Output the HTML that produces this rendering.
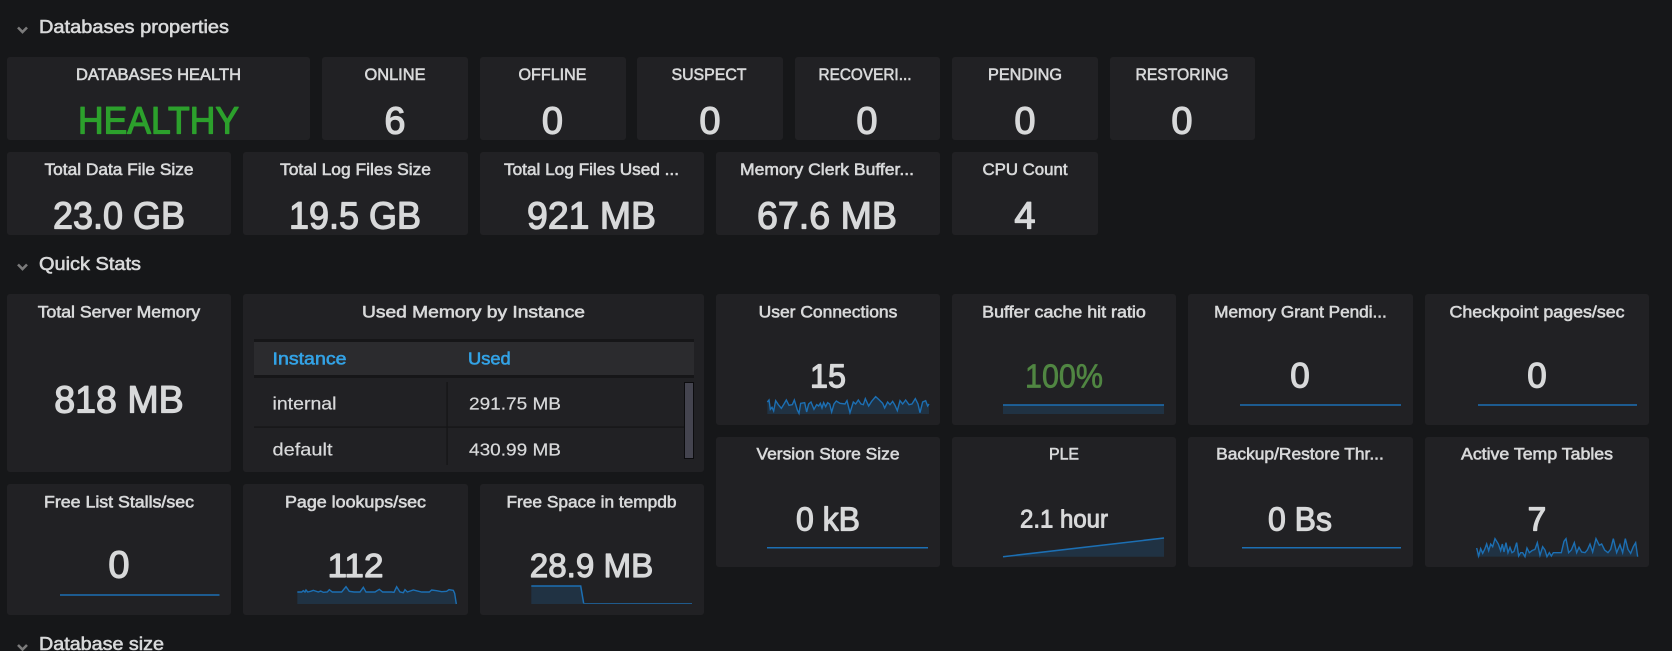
<!DOCTYPE html>
<html><head><meta charset="utf-8"><title>Dashboard</title>
<style>
html,body{margin:0;padding:0;background:#161719;width:1672px;height:651px;overflow:hidden}
svg{display:block;position:absolute;left:0;top:0}
text{font-family:"Liberation Sans",Arial,sans-serif;fill:#d8d9da;stroke-linejoin:round}
.ti{font-size:16.8px;text-anchor:middle;stroke:#d8d9da;stroke-width:.6px}
.v{font-size:38px;text-anchor:middle;stroke:#d8d9da;stroke-width:1.25px}
.m{font-size:33.5px;text-anchor:middle;stroke:#d8d9da;stroke-width:1.15px}
.s{font-size:25px;text-anchor:middle;stroke:#d8d9da;stroke-width:.9px}
.h{font-size:18.5px;stroke:#d8d9da;stroke-width:.6px}
.c{font-size:17.5px;stroke:#d8d9da;stroke-width:.2px}
.th{font-size:17.5px;fill:#33a2e5;stroke:#33a2e5;stroke-width:.6px}
.p{fill:#212124}
.l{fill:none;stroke:#1c6fb3;stroke-width:1.5}
.a{fill:#1f78c1;fill-opacity:.2;stroke:none}
.ch{fill:none;stroke:#7b7b7b;stroke-width:2.6}
</style></head><body>
<svg width="1672" height="651" viewBox="0 0 1672 651" xmlns="http://www.w3.org/2000/svg">
<!-- panels -->
<rect class="p" x="7" y="57" width="303" height="83" rx="3"/>
<rect class="p" x="322" y="57" width="146" height="83" rx="3"/>
<rect class="p" x="480" y="57" width="146" height="83" rx="3"/>
<rect class="p" x="637" y="57" width="146" height="83" rx="3"/>
<rect class="p" x="795" y="57" width="145" height="83" rx="3"/>
<rect class="p" x="952" y="57" width="146" height="83" rx="3"/>
<rect class="p" x="1110" y="57" width="145" height="83" rx="3"/>
<rect class="p" x="7" y="152" width="224" height="83" rx="3"/>
<rect class="p" x="243" y="152" width="225" height="83" rx="3"/>
<rect class="p" x="480" y="152" width="224" height="83" rx="3"/>
<rect class="p" x="716" y="152" width="224" height="83" rx="3"/>
<rect class="p" x="952" y="152" width="146" height="83" rx="3"/>
<rect class="p" x="7" y="294" width="224" height="178" rx="3"/>
<rect class="p" x="243" y="294" width="461" height="178" rx="3"/>
<rect class="p" x="7" y="484" width="224" height="131" rx="3"/>
<rect class="p" x="243" y="484" width="225" height="131" rx="3"/>
<rect class="p" x="480" y="484" width="224" height="131" rx="3"/>
<rect class="p" x="716" y="294" width="224" height="131" rx="3"/>
<rect class="p" x="952" y="294" width="224" height="131" rx="3"/>
<rect class="p" x="1188" y="294" width="225" height="131" rx="3"/>
<rect class="p" x="1425" y="294" width="224" height="131" rx="3"/>
<rect class="p" x="716" y="437" width="224" height="130" rx="3"/>
<rect class="p" x="952" y="437" width="224" height="130" rx="3"/>
<rect class="p" x="1188" y="437" width="225" height="130" rx="3"/>
<rect class="p" x="1425" y="437" width="224" height="130" rx="3"/>

<!-- section headers -->
<path class="ch" d="M18 27.5l4.5 4.5 4.5-4.5"/>
<path class="ch" d="M18 264.5l4.5 4.5 4.5-4.5"/>
<path class="ch" d="M18 645l4.5 4.5 4.5-4.5"/>
<text class="h" x="39" y="33" textLength="190" lengthAdjust="spacingAndGlyphs">Databases properties</text>
<text class="h" x="39" y="270" textLength="102" lengthAdjust="spacingAndGlyphs">Quick Stats</text>
<text class="h" x="39" y="650" textLength="125" lengthAdjust="spacingAndGlyphs">Database size</text>

<!-- row 1 -->
<text class="ti" x="158.5" y="80" textLength="165" lengthAdjust="spacingAndGlyphs">DATABASES HEALTH</text>
<text class="ti" x="395" y="80" textLength="61" lengthAdjust="spacingAndGlyphs">ONLINE</text>
<text class="ti" x="552.5" y="80" textLength="68" lengthAdjust="spacingAndGlyphs">OFFLINE</text>
<text class="ti" x="709" y="80" textLength="75" lengthAdjust="spacingAndGlyphs">SUSPECT</text>
<text class="ti" x="865" y="80" textLength="93" lengthAdjust="spacingAndGlyphs">RECOVERI...</text>
<text class="ti" x="1025" y="80" textLength="74" lengthAdjust="spacingAndGlyphs">PENDING</text>
<text class="ti" x="1182" y="80" textLength="93" lengthAdjust="spacingAndGlyphs">RESTORING</text>
<text class="v" x="158.5" y="133.5" textLength="161" lengthAdjust="spacingAndGlyphs" style="fill:#2ca02c;stroke:#2ca02c">HEALTHY</text>
<text class="v" x="395" y="133.5">6</text>
<text class="v" x="552.5" y="133.5">0</text>
<text class="v" x="710" y="133.5">0</text>
<text class="v" x="867" y="133.5">0</text>
<text class="v" x="1025" y="133.5">0</text>
<text class="v" x="1182" y="133.5">0</text>

<!-- row 2 -->
<text class="ti" x="119" y="175" textLength="149" lengthAdjust="spacingAndGlyphs">Total Data File Size</text>
<text class="ti" x="355.5" y="175" textLength="151" lengthAdjust="spacingAndGlyphs">Total Log Files Size</text>
<text class="ti" x="591.5" y="175" textLength="175" lengthAdjust="spacingAndGlyphs">Total Log Files Used ...</text>
<text class="ti" x="827" y="175" textLength="174" lengthAdjust="spacingAndGlyphs">Memory Clerk Buffer...</text>
<text class="ti" x="1025" y="175" textLength="85" lengthAdjust="spacingAndGlyphs">CPU Count</text>
<text class="v" x="119" y="228.3" textLength="132" lengthAdjust="spacingAndGlyphs">23.0 GB</text>
<text class="v" x="355" y="228.3" textLength="132" lengthAdjust="spacingAndGlyphs">19.5 GB</text>
<text class="v" x="591.5" y="228.3" textLength="129" lengthAdjust="spacingAndGlyphs">921 MB</text>
<text class="v" x="827" y="228.3" textLength="140" lengthAdjust="spacingAndGlyphs">67.6 MB</text>
<text class="v" x="1025" y="228.3">4</text>

<!-- left quick stats -->
<text class="ti" x="119" y="317.6" textLength="162.5" lengthAdjust="spacingAndGlyphs">Total Server Memory</text>
<text class="ti" x="473.5" y="317.6" textLength="223" lengthAdjust="spacingAndGlyphs">Used Memory by Instance</text>
<text class="v" x="119" y="412.7" textLength="129.5" lengthAdjust="spacingAndGlyphs">818 MB</text>
<text class="ti" x="119" y="507.6" textLength="150" lengthAdjust="spacingAndGlyphs">Free List Stalls/sec</text>
<text class="ti" x="355.5" y="507.6" textLength="141" lengthAdjust="spacingAndGlyphs">Page lookups/sec</text>
<text class="ti" x="591.5" y="507.6" textLength="170" lengthAdjust="spacingAndGlyphs">Free Space in tempdb</text>
<text class="v" x="119" y="577.7">0</text>
<text class="m" x="355.5" y="577" textLength="56" lengthAdjust="spacingAndGlyphs">112</text>
<text class="m" x="591.5" y="577" textLength="123.5" lengthAdjust="spacingAndGlyphs">28.9 MB</text>

<!-- table -->
<rect x="254" y="339" width="440" height="3" fill="#161618"/>
<rect x="254" y="342" width="440" height="33" fill="#2b2b2e"/>
<rect x="254" y="375" width="440" height="3" fill="#161618"/>
<rect x="446.4" y="382" width="1.4" height="83" fill="#161618"/>
<rect x="254" y="426.4" width="430" height="1.4" fill="#161618"/>
<rect x="684.5" y="382.5" width="9" height="76" fill="#44444f" stroke="#0c0c0e"/>
<text class="th" x="272.5" y="364.7" textLength="74" lengthAdjust="spacingAndGlyphs">Instance</text>
<text class="th" x="468" y="364.7" textLength="42.7" lengthAdjust="spacingAndGlyphs">Used</text>
<text class="c" x="272.5" y="409.5" textLength="64" lengthAdjust="spacingAndGlyphs">internal</text>
<text class="c" x="469" y="409.5" textLength="92" lengthAdjust="spacingAndGlyphs">291.75 MB</text>
<text class="c" x="272.5" y="455.5" textLength="60" lengthAdjust="spacingAndGlyphs">default</text>
<text class="c" x="469" y="455.5" textLength="92" lengthAdjust="spacingAndGlyphs">430.99 MB</text>

<!-- right grid -->
<text class="ti" x="828" y="317.6" textLength="138.7" lengthAdjust="spacingAndGlyphs">User Connections</text>
<text class="ti" x="1064" y="317.6" textLength="163.7" lengthAdjust="spacingAndGlyphs">Buffer cache hit ratio</text>
<text class="ti" x="1300.5" y="317.6" textLength="172.7" lengthAdjust="spacingAndGlyphs">Memory Grant Pendi...</text>
<text class="ti" x="1537" y="317.6" textLength="175" lengthAdjust="spacingAndGlyphs">Checkpoint pages/sec</text>
<text class="ti" x="828" y="459.6" textLength="143" lengthAdjust="spacingAndGlyphs">Version Store Size</text>
<text class="ti" x="1064" y="459.6" textLength="30" lengthAdjust="spacingAndGlyphs">PLE</text>
<text class="ti" x="1300" y="459.6" textLength="167.7" lengthAdjust="spacingAndGlyphs">Backup/Restore Thr...</text>
<text class="ti" x="1537" y="459.6" textLength="152" lengthAdjust="spacingAndGlyphs">Active Temp Tables</text>
<text class="m" x="828" y="387.3" textLength="36" lengthAdjust="spacingAndGlyphs">15</text>
<text class="m" x="1064" y="387.3" textLength="78" lengthAdjust="spacingAndGlyphs" style="fill:#508642;stroke:#508642;stroke-width:.7px">100%</text>
<text class="v" x="1300" y="387.3" style="font-size:35px">0</text>
<text class="v" x="1537" y="387.3" style="font-size:35px">0</text>
<text class="m" x="828" y="530.7" textLength="64" lengthAdjust="spacingAndGlyphs">0 kB</text>
<text class="s" x="1064" y="527.7" textLength="88" lengthAdjust="spacingAndGlyphs">2.1 hour</text>
<text class="m" x="1300" y="530.7" textLength="64" lengthAdjust="spacingAndGlyphs">0 Bs</text>
<text class="m" x="1537" y="530.7">7</text>

<!-- flat sparklines -->
<path class="l" d="M60 595H219.5"/>
<rect class="a" x="1003" y="405" width="161" height="9"/>
<path class="l" d="M1003 405H1164"/>
<path class="l" d="M1240 405H1401"/>
<path class="l" d="M1478 405H1637"/>
<path class="l" d="M767 547.7H928"/>
<path class="l" d="M1242 547.7H1401"/>
<path class="a" d="M1003 556.7L1164 538V556.7Z"/>
<path class="l" d="M1003 556.7L1164 538"/>
<path class="a" d="M531.3 586H580.7L583.7 603.5H692V604H531.3Z"/>
<path class="l" d="M531.3 586H580.7L583.7 603.5"/>
<path d="M583.7 603.5H692" fill="none" stroke="#1f5a8c" stroke-width="1"/>

<!-- User Connections sparkline -->
<g transform="translate(760 390) scale(.3333)">
<path class="a" d="M22 36L27 30 31 58 36 52 41 63 47 32 55 44 64 55 72 42 79 30 87 46 97 44 103 30 112 60 117 70 122 40 134 38 140 66 146 42 153 36 162 58 170 44 176 48 181 40 186 54 191 38 197 50 203 38 209 42 215 66 222 42 229 33 240 40 255 42 261 32 270 68 280 36 287 42 295 30 303 42 310 44 316 26 326 48 335 34 347 20 358 30 368 40 374 54 383 36 390 44 398 34 405 46 412 62 420 32 428 42 437 30 447 44 456 42 466 26 474 42 480 68 488 36 497 32 503 48 507 42V72H22Z"/>
<path class="l" style="stroke-width:4.2" d="M22 36L27 30 31 58 36 52 41 63 47 32 55 44 64 55 72 42 79 30 87 46 97 44 103 30 112 60 117 70 122 40 134 38 140 66 146 42 153 36 162 58 170 44 176 48 181 40 186 54 191 38 197 50 203 38 209 42 215 66 222 42 229 33 240 40 255 42 261 32 270 68 280 36 287 42 295 30 303 42 310 44 316 26 326 48 335 34 347 20 358 30 368 40 374 54 383 36 390 44 398 34 405 46 412 62 420 32 428 42 437 30 447 44 456 42 466 26 474 42 480 68 488 36 497 32 503 48 507 42"/>
</g>

<!-- Active Temp Tables sparkline -->
<g transform="translate(1470 530) scale(.3333)">
<path class="a" d="M20 54L26 78 32 56 38 70 44 58 50 42 56 62 62 42 68 50 75 26 85 42 92 62 97 42 102 66 108 38 114 68 120 52 126 68 132 64 140 38 146 78 152 68 158 68 165 80 171 54 178 68 186 62 195 58 202 38 210 76 218 50 225 60 231 80 238 68 244 78 250 68 274 68 282 34 288 26 296 68 304 60 313 38 320 68 327 52 335 66 345 68 352 60 360 42 368 66 378 26 388 46 395 42 404 60 414 68 422 58 430 26 440 68 450 44 458 68 466 26 474 58 482 70 490 50 497 38 503 80H20Z"/>
<path class="l" style="stroke-width:4.2" d="M20 54L26 78 32 56 38 70 44 58 50 42 56 62 62 42 68 50 75 26 85 42 92 62 97 42 102 66 108 38 114 68 120 52 126 68 132 64 140 38 146 78 152 68 158 68 165 80 171 54 178 68 186 62 195 58 202 38 210 76 218 50 225 60 231 80 238 68 244 78 250 68 274 68 282 34 288 26 296 68 304 60 313 38 320 68 327 52 335 66 345 68 352 60 360 42 368 66 378 26 388 46 395 42 404 60 414 68 422 58 430 26 440 68 450 44 458 68 466 26 474 58 482 70 490 50 497 38 503 80"/>
</g>

<!-- Page lookups sparkline -->
<g transform="translate(290 580) scale(.3333)">
<path class="a" d="M22 36L35 36 40 32 45 36 48 30 53 36 62 34 70 31 85 36 92 33 100 37 112 36 118 29 127 36 155 36 168 20 178 34 192 36 210 36 220 22 228 36 255 36 268 28 278 36 305 36 312 37 320 20 330 36 340 38 345 29 352 36 370 30 395 36 418 36 425 30 440 32 455 35 470 34 477 29 490 31 494 40 499 72H22Z"/>
<path class="l" style="stroke-width:4.2" d="M22 36L35 36 40 32 45 36 48 30 53 36 62 34 70 31 85 36 92 33 100 37 112 36 118 29 127 36 155 36 168 20 178 34 192 36 210 36 220 22 228 36 255 36 268 28 278 36 305 36 312 37 320 20 330 36 340 38 345 29 352 36 370 30 395 36 418 36 425 30 440 32 455 35 470 34 477 29 490 31 494 40 499 72"/>
</g>
</svg>
</body></html>
